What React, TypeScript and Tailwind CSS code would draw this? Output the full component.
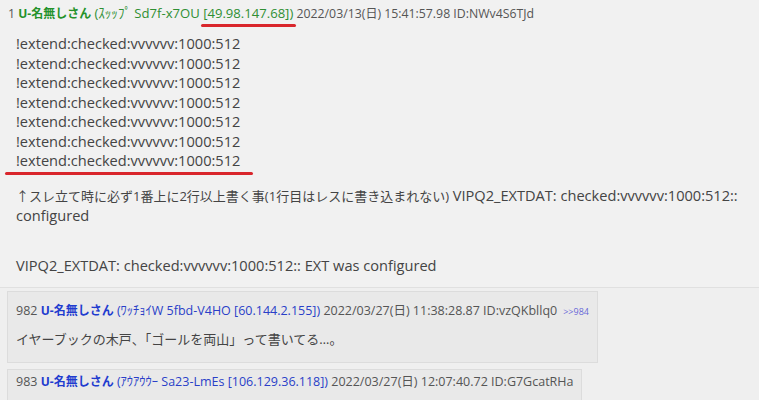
import React from 'react';

const FONT = "font-['Open_Sans','Noto_Sans_CJK_JP',sans-serif]";

const extendLines = Array.from({ length: 7 }, () => '!extend:checked:vvvvvv:1000:512');

// Japanese runs are set a bit smaller than the latin text around them
const J: React.FC<{ children: React.ReactNode }> = ({ children }) => (
  <span className="text-[13px]">{children}</span>
);

// red hand-drawn annotation bar under a piece of text
const Mark: React.FC<{ children: React.ReactNode; className: string }> = ({ children, className }) => (
  <span className="relative">
    {children}
    <span className={`absolute h-[3px] rounded-full bg-[#d9262c] ${className}`} />
  </span>
);

interface ReplyProps {
  no: number;
  trip: string;
  date: string;
  id: string;
  anchor?: string;
  body?: string;
  top: string;
}

const Reply: React.FC<ReplyProps> = ({ no, trip, date, id, anchor, body, top }) => (
  <div className={`ml-[7px] w-fit bg-[#e9e9e9] border border-[#dcdcdc] px-2 pb-[13px] ${top}`}>
    <div className="text-[12.5px] leading-[18px] text-[#555] whitespace-nowrap">
      {no} <b className="text-[#1f3ccf] text-[12px]">U-名無しさん</b>{' '}
      <span className="text-[#2a3fc8]">{trip}</span> {date} ID:{id}
      {anchor && <span className="ml-[6px] text-[9px] text-[#6a6ad8]">{anchor}</span>}
    </div>
    {body && (
      <div className="mt-[8px] text-[14px] leading-[20px] text-[#444]">
        <J>{body}</J>
      </div>
    )}
  </div>
);

export default function App() {
  return (
    <div className={`w-[759px] h-[400px] overflow-hidden bg-[#efefef] ${FONT}`}>
      <div className="px-2 pt-[4px] pb-[12px] border-b border-[#e0e0e0] bg-[#f1f1f1]">
        <div className="text-[12.3px] leading-[18px] text-[#555] whitespace-nowrap">
          1 <b className="text-[#23922a] text-[12px]">U-名無しさん</b>{' '}
          <span className="text-[#2f8f33] text-[13.1px]">
            (ｽｯｯﾌﾟ Sd7f-x7OU <Mark className="left-[-2px] right-[-3px] bottom-[-5px]">[49.98.147.68])</Mark>
          </span>{' '}
          2022/03/13(<span className="text-[12px]">日</span>) 15:41:57.98 ID:NWv4S6TJd
        </div>
        <div className="mt-[11px] pl-2 text-[14.6px] leading-[19.5px] text-[#444]">
          {extendLines.map((line, i) => (
            <div key={i}>
              {i === extendLines.length - 1 ? (
                <Mark className="left-[-11px] right-[-13px] bottom-[-5px]">{line}</Mark>
              ) : (
                line
              )}
            </div>
          ))}
          <div className="h-[15px]" />
          <div className="leading-[19px]">
            <J>↑スレ立て時に必ず1番上に2行以上書く事(1行目はレスに書き込まれない)</J> VIPQ2_EXTDAT:
            checked:vvvvvv:1000:512:: configured
          </div>
          <div className="h-[31px]" />
          <div>VIPQ2_EXTDAT: checked:vvvvvv:1000:512:: EXT was configured</div>
        </div>
      </div>
      <div className="pt-[3px] flex flex-col gap-[6px]">
        <Reply
          no={982}
          trip="(ﾜｯﾁｮｲW 5fbd-V4HO [60.144.2.155])"
          date="2022/03/27(日) 11:38:28.87"
          id="vzQKbllq0"
          anchor=">>984"
          body="イヤーブックの木戸、「ゴールを両山」って書いてる…。"
          top="pt-[10px]"
        />
        <Reply
          no={983}
          trip="(ｱｳｱｳｳｰ Sa23-LmEs [106.129.36.118])"
          date="2022/03/27(日) 12:07:40.72"
          id="G7GcatRHa"
          top="pt-[3px]"
        />
      </div>
    </div>
  );
}
